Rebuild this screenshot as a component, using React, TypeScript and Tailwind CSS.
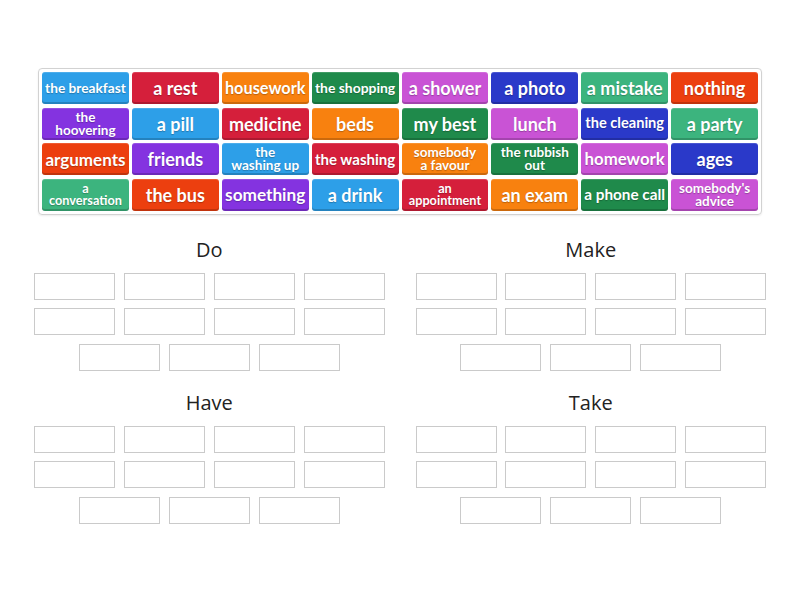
import React from 'react';

// tile colours cycle in this order
const COLORS = [
  'bg-[#2d9fe8]',
  'bg-[#d51f3b]',
  'bg-[#f8810f]',
  'bg-[#1f8a4b]',
  'bg-[#c953d5]',
  'bg-[#2a39c9]',
  'bg-[#3cb47e]',
  'bg-[#ec3f0f]',
  'bg-[#8433e0]',
];

const TILES: { text: string; size: string }[] = [
  { text: 'the breakfast', size: 'text-[13.7px]' },
  { text: 'a rest', size: 'text-[18px]' },
  { text: 'housework', size: 'text-[16.3px]' },
  { text: 'the shopping', size: 'text-[13.9px]' },
  { text: 'a shower', size: 'text-[18px]' },
  { text: 'a photo', size: 'text-[18px]' },
  { text: 'a mistake', size: 'text-[18px]' },
  { text: 'nothing', size: 'text-[18px]' },
  { text: 'the\nhoovering', size: 'text-[13.5px]' },
  { text: 'a pill', size: 'text-[18px]' },
  { text: 'medicine', size: 'text-[18px]' },
  { text: 'beds', size: 'text-[18px]' },
  { text: 'my best', size: 'text-[18px]' },
  { text: 'lunch', size: 'text-[18px]' },
  { text: 'the cleaning', size: 'text-[14.6px]' },
  { text: 'a party', size: 'text-[18px]' },
  { text: 'arguments', size: 'text-[17px]' },
  { text: 'friends', size: 'text-[18px]' },
  { text: 'the\nwashing up', size: 'text-[13.5px]' },
  { text: 'the washing', size: 'text-[15px]' },
  { text: 'somebody\na favour', size: 'text-[13.5px]' },
  { text: 'the rubbish\nout', size: 'text-[13.5px]' },
  { text: 'homework', size: 'text-[16.8px]' },
  { text: 'ages', size: 'text-[18px]' },
  { text: 'a\nconversation', size: 'text-[12.7px]' },
  { text: 'the bus', size: 'text-[18px]' },
  { text: 'something', size: 'text-[17.2px]' },
  { text: 'a drink', size: 'text-[18px]' },
  { text: 'an\nappointment', size: 'text-[12.7px]' },
  { text: 'an exam', size: 'text-[18px]' },
  { text: 'a phone call', size: 'text-[15.3px]' },
  { text: "somebody's\nadvice", size: 'text-[13.5px]' },
];

const GROUPS = ['Do', 'Make', 'Have', 'Take'];

function Slot() {
  return <div className="h-[27px] w-[81px] border border-[#cacaca] bg-white" />;
}

function Group({ title }: { title: string }) {
  return (
    <div className="flex flex-col">
      <h2 className="mb-[9px] text-center text-[20px] leading-[28px] text-[#222]">{title}</h2>
      <div className="grid grid-cols-4 gap-x-[9px] gap-y-[8.5px]">
        {Array.from({ length: 8 }).map((_, i) => (
          <Slot key={i} />
        ))}
      </div>
      <div className="mt-[8.5px] flex justify-center gap-[9px]">
        <Slot />
        <Slot />
        <Slot />
      </div>
    </div>
  );
}

export default function App() {
  return (
    <div className="min-h-screen bg-white pt-[68px] font-['Open_Sans',sans-serif]">
      {/* Word tiles */}
      <div className="mx-auto grid w-[724px] grid-cols-8 gap-x-[3px] gap-y-[3.5px] rounded-[4px] border border-[#d2d2d2] p-[3px] shadow-[0_1px_2px_rgba(0,0,0,0.08)]">
        {TILES.map((t, i) => (
          <div
            key={t.text}
            className={`flex h-[32px] items-center justify-center rounded-[3px] px-[2px] text-center font-['Lato',sans-serif] font-bold whitespace-pre text-white shadow-[inset_0_-2px_0_rgba(0,0,0,0.18),inset_0_1px_0_rgba(255,255,255,0.15)] [text-shadow:0_1px_1px_rgba(0,0,0,0.25)] ${COLORS[i % 9]} ${t.size} ${t.text.includes('\n') ? 'leading-[0.93]' : 'leading-none'}`}
          >
            {t.text}
          </div>
        ))}
      </div>

      {/* Drop zones */}
      <div className="mx-auto mt-[21px] grid w-[732px] grid-cols-2 gap-x-[31px] gap-y-[18px]">
        {GROUPS.map((g) => (
          <Group key={g} title={g} />
        ))}
      </div>
    </div>
  );
}
